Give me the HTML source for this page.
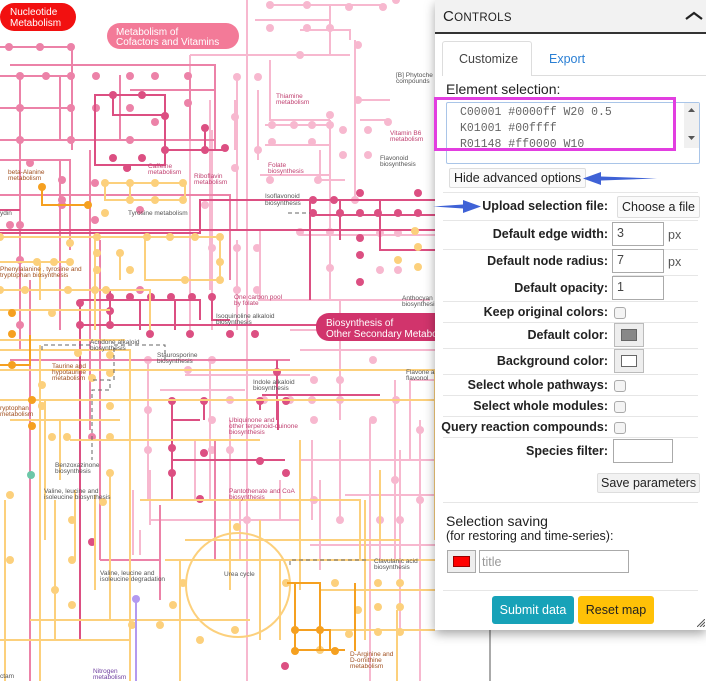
<!DOCTYPE html>
<html><head><meta charset="utf-8"><style>
*{box-sizing:border-box}
body{margin:0;width:706px;height:681px;overflow:hidden;background:#fff;font-family:"Liberation Sans",Arial,sans-serif;position:relative}
#map{position:absolute;left:0;top:0}
#panel{position:absolute;left:435px;top:0;width:271px;height:630px;background:#fff;box-shadow:0 4px 10px rgba(0,0,0,.35);font-size:12.5px;color:#222}
.hdr{height:34px;background:#f2f2f2;border-bottom:2px solid #333;padding:8px 0 0 8px;font-size:15px;letter-spacing:.3px}
.hdr small{font-size:11.5px}
.row{position:absolute;left:8px;right:8px;border-top:1px solid #e6e6e6}
.lbl{position:absolute;right:98px;font-weight:bold;text-align:right;white-space:nowrap;font-size:12.5px}
.inp{position:absolute;left:177px;width:52px;height:24px;border:1px solid #aaa;padding:3px 4px;font-size:12.5px;color:#444}
.cb{position:absolute;left:179px;width:12px;height:12px;border:1px solid #aaa;border-radius:3px;background:#f4f4f4}
.btn{position:absolute;background:#f2f2f2;border:1px solid #ddd;border-radius:2px;padding:2px 4px;font-size:12.5px;white-space:nowrap}
</style></head><body>
<svg id="map" width="706" height="681" viewBox="0 0 706 681" fill="none" stroke-width="2">
<g stroke="#f7b8cf">
<path d="M247 0V681M270 5H385M255 20H330M330 5V55M270 60V120H330M300 30H350V40M308 55H255M258 90V160M190 55H350M190 55V120M237 80V230M330 120V300M355 40V200M355 100H390M360 120H390M265 125H330M265 145H330M260 175H330M320 180H345M320 150V180M300 235H450M310 230V300M258 300H430M290 330H435M300 350H435M237 240V330M260 230V300M212 130V330M190 110V330M340 300V420M280 400H435M370 420V681M395 380V560M410 380H435M410 380V460M312 440V520M300 460H435M320 480V570M355 400H435M420 420V681M400 450V630M210 100V290M235 100V150M215 440V520M340 440V520M345 495H435M380 470V560M310 545H435M150 520H300M140 530V555M133 490V555M150 470V525M280 480V520"/>
<path d="M148 360V500M210 360V500M160 390H245M195 440V500M185 375H310M230 420V560M240 500V560"/>
</g>
<g fill="#f7b8cf" stroke="none">
<circle cx="270" cy="5" r="4"/><circle cx="307" cy="5" r="4"/><circle cx="349" cy="7" r="4"/><circle cx="383" cy="7" r="4"/><circle cx="270" cy="28" r="4"/><circle cx="307" cy="28" r="4"/><circle cx="330" cy="28" r="4"/><circle cx="237" cy="77" r="4"/><circle cx="258" cy="77" r="4"/><circle cx="300" cy="55" r="4"/><circle cx="358" cy="45" r="4"/><circle cx="358" cy="100" r="4"/><circle cx="388" cy="122" r="4"/><circle cx="330" cy="115" r="4"/><circle cx="272" cy="125" r="4"/><circle cx="294" cy="125" r="4"/><circle cx="312" cy="125" r="4"/><circle cx="330" cy="125" r="4"/><circle cx="272" cy="142" r="4"/><circle cx="312" cy="142" r="4"/><circle cx="343" cy="130" r="4"/><circle cx="368" cy="130" r="4"/><circle cx="343" cy="155" r="4"/><circle cx="368" cy="155" r="4"/><circle cx="318" cy="180" r="4"/><circle cx="270" cy="180" r="4"/><circle cx="205" cy="205" r="4"/><circle cx="235" cy="117" r="4"/><circle cx="235" cy="168" r="4"/><circle cx="258" cy="150" r="4"/><circle cx="380" cy="233" r="4"/><circle cx="398" cy="233" r="4"/><circle cx="398" cy="270" r="4"/><circle cx="380" cy="270" r="4"/><circle cx="300" cy="232" r="4"/><circle cx="330" cy="232" r="4"/><circle cx="330" cy="268" r="4"/><circle cx="257" cy="248" r="4"/><circle cx="257" cy="290" r="4"/><circle cx="237" cy="248" r="4"/><circle cx="237" cy="290" r="4"/><circle cx="212" cy="248" r="4"/><circle cx="212" cy="360" r="4"/><circle cx="148" cy="360" r="4"/><circle cx="148" cy="410" r="4"/><circle cx="148" cy="450" r="4"/><circle cx="212" cy="420" r="4"/><circle cx="212" cy="450" r="4"/><circle cx="264" cy="400" r="4"/><circle cx="290" cy="400" r="4"/><circle cx="312" cy="400" r="4"/><circle cx="340" cy="400" r="4"/><circle cx="230" cy="400" r="4"/><circle cx="188" cy="370" r="4"/><circle cx="230" cy="450" r="4"/><circle cx="247" cy="520" r="4"/><circle cx="314" cy="380" r="4"/><circle cx="340" cy="380" r="4"/><circle cx="314" cy="420" r="4"/><circle cx="314" cy="500" r="4"/><circle cx="340" cy="520" r="4"/><circle cx="380" cy="520" r="4"/><circle cx="400" cy="520" r="4"/><circle cx="420" cy="500" r="4"/><circle cx="396" cy="400" r="4"/><circle cx="396" cy.="460" r="4"/><circle cx="420" cy="430" r="4"/><circle cx="373" cy="360" r="4"/><circle cx="373" cy="420" r="4"/><circle cx="395" cy="480" r="4"/><circle cx="355" cy="200" r="4"/></g>
<g stroke="#ec82a8">
<path d="M0 47H72V150M0 76H72M0 108H72M10 65H215V150M20 75V140M60 75V140H180M120 75V140M130 90H215M190 75V140M0 140H215M0 160H70V250M60 160V330M90 150V430M20 140V350M100 240V560M0 195H140M140 195H230V280M30 280V330M10 360H290M30 300V681M215 440V560M160 505V600M100 560H160"/>
</g>
<g fill="#ec82a8" stroke="none">
<circle cx="9" cy="47" r="4"/><circle cx="40" cy="47" r="4"/><circle cx="71" cy="47" r="4"/><circle cx="20" cy="76" r="4"/><circle cx="46" cy="76" r="4"/><circle cx="71" cy="76" r="4"/><circle cx="96" cy="76" r="4"/><circle cx="130" cy="76" r="4"/><circle cx="155" cy="76" r="4"/><circle cx="188" cy="76" r="4"/><circle cx="20" cy="108" r="4"/><circle cx="71" cy="108" r="4"/><circle cx="96" cy="108" r="4"/><circle cx="130" cy="108" r="4"/><circle cx="188" cy="103" r="4"/><circle cx="20" cy="140" r="4"/><circle cx="71" cy="140" r="4"/><circle cx="130" cy="140" r="4"/><circle cx="155" cy="122" r="4"/><circle cx="30" cy="163" r="4"/><circle cx="62" cy="180" r="4"/><circle cx="62" cy="200" r="4"/><circle cx="95" cy="183" r="4"/><circle cx="95" cy="220" r="4"/><circle cx="140" cy="210" r="4"/><circle cx="20" cy="225" r="4"/><circle cx="20" cy="260" r="4"/><circle cx="10" cy="225" r="4"/><circle cx="62" cy="205" r="4"/><circle cx="140" cy="290" r="4"/><circle cx="20" cy="325" r="4"/><circle cx="92" cy="437" r="4"/></g>
<g stroke="#dc4f82">
<path d="M95 95H165V165H95ZM113 95V115H165M165 115V150H225M205 128V150M165 165V115M130 165V170M0 230H435M0 233H200V200H435M310 200V300M312 215H435M340 200V240M380 200V250H435M310 270V283M0 210H20M80 300H200V320M80 300V640M80 325H435M110 325V290M140 300V330M175 300V330M212 300V320H230M172 400H290M172 400V500M172 420H200M172 460H285M204 420V400M172 500H200M260 400V410M262 395H380M277 400V360M277 400V420M278 400V430"/>
</g>
<g fill="#dc4f82" stroke="none">
<circle cx="113" cy="95" r="4"/><circle cx="142" cy="95" r="4"/><circle cx="165" cy="116" r="4"/><circle cx="205" cy="128" r="4"/><circle cx="205" cy="150" r="4"/><circle cx="225" cy="148" r="4"/><circle cx="165" cy="150" r="4"/><circle cx="113" cy="158" r="4"/><circle cx="142" cy="158" r="4"/><circle cx="127" cy="168" r="4"/><circle cx="313" cy="200" r="4"/><circle cx="334" cy="200" r="4"/><circle cx="360" cy="193" r="4"/><circle cx="360" cy="213" r="4"/><circle cx="360" cy="238" r="4"/><circle cx="360" cy="255" r="4"/><circle cx="360" cy="282" r="4"/><circle cx="313" cy="213" r="4"/><circle cx="340" cy="213" r="4"/><circle cx="378" cy="213" r="4"/><circle cx="398" cy="213" r="4"/><circle cx="418" cy="213" r="4"/><circle cx="418" cy="193" r="4"/><circle cx="110" cy="297" r="4"/><circle cx="130" cy="297" r="4"/><circle cx="151" cy="297" r="4"/><circle cx="171" cy="297" r="4"/><circle cx="192" cy="297" r="4"/><circle cx="212" cy="297" r="4"/><circle cx="110" cy="311" r="4"/><circle cx="80" cy="303" r="4"/><circle cx="80" cy="325" r="4"/><circle cx="110" cy="325" r="4"/><circle cx="150" cy="334" r="4"/><circle cx="190" cy="334" r="4"/><circle cx="230" cy="334" r="4"/><circle cx="255" cy="334" r="4"/><circle cx="172" cy="401" r="4"/><circle cx="204" cy="401" r="4"/><circle cx="260" cy="401" r="4"/><circle cx="286" cy="401" r="4"/><circle cx="277" cy="372" r="4"/><circle cx="172" cy="448" r="4"/><circle cx="172" cy="473" r="4"/><circle cx="200" cy="499" r="4"/><circle cx="204" cy="453" r="4"/><circle cx="260" cy="461" r="4"/><circle cx="286" cy="473" r="4"/><circle cx="92" cy="542" r="4"/><circle cx="285" cy="666" r="4"/></g>
<g stroke="#fcd07c">
<path d="M105 183H185V200H105ZM130 183V200M0 237H220V280H145V237M95 237V330M120 250V280M0 262H70M40 262V300M0 290H150V330M0 310H110M0 350H130V681M0 340H125M40 345V681M0 370H435V540M0 400H435M45 400V540M10 420H120M60 420V480M70 440H100M130 420V600M100 440H260M110 470V620M75 490V560M140 500H360V560M165 560H435M55 500V640M95 495V590M230 520V590M185 540H380M180 560V681M260 520V640M30 620H250M0 640H130M300 440V590M280 560V640M255 540H400M320 590H435M315 630H435M365 500V640M380 470V540M397 610V681M5 500V681"/>
<circle cx="238" cy="585" r="52"/>
</g>
<g fill="#fcd07c" stroke="none">
<circle cx="105" cy="183" r="4"/><circle cx="130" cy="183" r="4"/><circle cx="155" cy="183" r="4"/><circle cx="183" cy="183" r="4"/><circle cx="130" cy="200" r="4"/><circle cx="155" cy="200" r="4"/><circle cx="183" cy="200" r="4"/><circle cx="105" cy="213" r="4"/><circle cx="0" cy="237" r="4"/><circle cx="97" cy="237" r="4"/><circle cx="147" cy="237" r="4"/><circle cx="170" cy="237" r="4"/><circle cx="195" cy="237" r="4"/><circle cx="220" cy="237" r="4"/><circle cx="220" cy="262" r="4"/><circle cx="220" cy="280" r="4"/><circle cx="185" cy="280" r="4"/><circle cx="97" cy="253" r="4"/><circle cx="120" cy="253" r="4"/><circle cx="97" cy="270" r="4"/><circle cx="130" cy="270" r="4"/><circle cx="70" cy="243" r="4"/><circle cx="37" cy="262" r="4"/><circle cx="54" cy="262" r="4"/><circle cx="70" cy="262" r="4"/><circle cx="25" cy="290" r="4"/><circle cx="68" cy="290" r="4"/><circle cx="95" cy="290" r="4"/><circle cx="106" cy="290" r="4"/><circle cx="0" cy="290" r="4"/><circle cx="52" cy="313" r="4"/><circle cx="78" cy="353" r="4"/><circle cx="110" cy="355" r="4"/><circle cx="42" cy="385" r="4"/><circle cx="42" cy="406" r="4"/><circle cx="42" cy="406" r="4"/><circle cx="110" cy="373" r="4"/><circle cx="110" cy="406" r="4"/><circle cx="92" cy="378" r="4"/><circle cx="52" cy="437" r="4"/><circle cx="67" cy="437" r="4"/><circle cx="110" cy="437" r="4"/><circle cx="110" cy="473" r="4"/><circle cx="103" cy="502" r="4"/><circle cx="72" cy="520" r="4"/><circle cx="72" cy="560" r="4"/><circle cx="55" cy="590" r="4"/><circle cx="72" cy="605" r="4"/><circle cx="132" cy="625" r="4"/><circle cx="160" cy="625" r="4"/><circle cx="237" cy="527" r="4"/><circle cx="183" cy="583" r="4"/><circle cx="286" cy="583" r="4"/><circle cx="173" cy="605" r="4"/><circle cx="200" cy="640" r="4"/><circle cx="235" cy="630" r="4"/><circle cx="335" cy="583" r="4"/><circle cx="378" cy="583" r="4"/><circle cx="400" cy="583" r="4"/><circle cx="378" cy="607" r="4"/><circle cx="400" cy="607" r="4"/><circle cx="358" cy="610" r="4"/><circle cx="378" cy="632" r="4"/><circle cx="400" cy="632" r="4"/><circle cx="349" cy="634" r="4"/><circle cx="320" cy="650" r="4"/><circle cx="10" cy="495" r="4"/><circle cx="10" cy="560" r="4"/><circle cx="415" cy="231" r="4"/><circle cx="398" cy="260" r="4"/><circle cx="418" cy="267" r="4"/><circle cx="418" cy="247" r="4"/></g>
<g stroke="#f5a020"><path d="M42 185V205H90M30 335V360M0 365H30V340M287 583H320V630M295 630H330V651M296 650H345M320 630V651M295 583V650M355 583V651"/></g>
<g fill="#f5a020" stroke="none"><circle cx="42" cy="187" r="4"/><circle cx="88" cy="205" r="4"/><circle cx="12" cy="313" r="4"/><circle cx="12" cy="334" r="4"/><circle cx="32" cy="400" r="4"/><circle cx="32" cy="426" r="4"/><circle cx="12" cy="365" r="4"/><circle cx="295" cy="630" r="4"/><circle cx="320" cy="630" r="4"/><circle cx="295" cy="651" r="4"/><circle cx="335" cy="651" r="4"/></g>
<circle cx="31" cy="475" r="4" fill="#6cc7a8"/><circle cx="136" cy="599" r="4" fill="#b39af0"/><path d="M136 600V681" stroke="#b39af0"/>
<g stroke="#666" stroke-width="1" stroke-dasharray="4 3"><path d="M42 350V345H90M93 380H110V390H92V460M288 213H310M290 565V560H368M114 380V345H165V360"/></g>
<path d="M490 630V681" stroke="#555" stroke-width="1"/>
<rect x="0" y="3" width="76" height="28" rx="14" fill="#f21010"/>
<rect x="107" y="23" width="132" height="26" rx="13" fill="#f37a98"/>
<rect x="316" y="313" width="140" height="28" rx="13" fill="#d1346c"/>
<g font-family="Liberation Sans" stroke="none">
<text fill="#fff" font-size="10"><tspan x="10" y="15">Nucleotide</tspan><tspan x="10" y="26">Metabolism</tspan></text>
<text fill="#fff" font-size="10"><tspan x="116" y="35">Metabolism of</tspan><tspan x="116" y="45">Cofactors and Vitamins</tspan></text>
<text fill="#fff" font-size="10"><tspan x="326" y="326">Biosynthesis of</tspan><tspan x="326" y="337">Other Secondary Metabo</tspan></text>
<g font-size="6.5" fill="#c04070">
<text x="276" y="98">Thiamine</text><text x="276" y="104">metabolism</text>
<text x="148" y="168">Caffeine</text><text x="148" y="174">metabolism</text>
<text x="194" y="178">Riboflavin</text><text x="194" y="184">metabolism</text>
<text x="268" y="167">Folate</text><text x="268" y="173">biosynthesis</text>
<text x="390" y="135">Vitamin B6</text><text x="390" y="141">metabolism</text>
<text x="234" y="299">One carbon pool</text><text x="234" y="305">by folate</text>
<text x="229" y="422">Ubiquinone and</text><text x="229" y="428">other terpenoid-quinone</text><text x="229" y="434">biosynthesis</text>
<text x="229" y="493">Pantothenate and CoA</text><text x="229" y="499">biosynthesis</text>
</g>
<g font-size="6.5" fill="#a05020">
<text x="8" y="174">beta-Alanine</text><text x="8" y="180">metabolism</text>
<text x="52" y="368">Taurine and</text><text x="52" y="374">hypotaurine</text><text x="52" y="380">metabolism</text>
<text x="0" y="410">ryptophan</text><text x="0" y="416">metabolism</text>
<text x="0" y="271">Phenylalanine , tyrosine and</text><text x="0" y="277">tryptophan biosynthesis</text>
<text x="350" y="656">D-Arginine and</text><text x="350" y="662">D-ornithine</text><text x="350" y="668">metabolism</text>
</g>
<g font-size="6.5" fill="#555">
<text x="128" y="215">Tyrosine metabolism</text>
<text x="0" y="215">ydin</text>
<text x="265" y="198">Isoflavonoid</text><text x="265" y="205">biosynthesis</text>
<text x="216" y="318">Isoquinoline alkaloid</text><text x="216" y="324">biosynthesis</text>
<text x="90" y="344">Acridone alkaloid</text><text x="90" y="350">biosynthesis</text>
<text x="157" y="357">Staurosporine</text><text x="157" y="363">biosynthesis</text>
<text x="253" y="384">Indole alkaloid</text><text x="253" y="390">biosynthesis</text>
<text x="55" y="467">Benzoxazinone</text><text x="55" y="473">biosynthesis</text>
<text x="44" y="493">Valine, leucine and</text><text x="44" y="499">isoleucine biosynthesis</text>
<text x="100" y="575">Valine, leucine and</text><text x="100" y="581">isoleucine degradation</text>
<text x="224" y="576">Urea cycle</text>
<text x="374" y="563">Clavulanic acid</text><text x="374" y="569">biosynthesis</text>
<text x="402" y="300">Anthocyan</text><text x="402" y="306">biosynthesi</text>
<text x="380" y="160">Flavonoid</text><text x="380" y="166">biosynthesis</text>
<text x="396" y="77">[B] Phytoche</text><text x="396" y="83">compounds</text>
<text x="406" y="374">Flavone a</text><text x="406" y="380">flavonol</text>
<text x="0" y="678">ctam</text>
</g>
<text font-size="6.5" fill="#7040a0"><tspan x="93" y="673">Nitrogen</tspan><tspan x="93" y="679">metabolism</tspan></text>
</g>
</svg>

<div id="panel">
<div class="hdr"><span style="font-size:15px">C</span><small>ONTROLS</small><svg style="position:absolute;right:2px;top:10px" width="20" height="12"><path d="M2 9L10 3L18 9" stroke="#222" stroke-width="2.2" fill="none"/></svg></div>
<div style="position:absolute;left:7px;top:41px;width:90px;height:35px;border:1px solid #ddd;border-bottom:none;border-radius:3px 3px 0 0;background:#fff;padding:10px 0 0 16px;color:#444;font-size:12.5px">Customize</div>
<div style="position:absolute;left:114px;top:52px;color:#2a7fd4;font-size:12.5px">Export</div>
<div style="position:absolute;left:96px;right:0;top:75px;border-top:1px solid #ddd"></div>
<div style="position:absolute;left:11px;top:81px;font-size:14px;color:#222">Element selection:</div>
<div style="position:absolute;left:11px;top:102px;width:254px;height:62px;border:1px solid #a9c5e8;border-radius:2px;font-family:'Liberation Mono',monospace;font-size:11.5px;color:#666;padding:2px 0 0 13px;line-height:16px">C00001 #0000ff W20 0.5<br>K01001 #00ffff<br>R01148 #ff0000 W10
<div style="position:absolute;right:0;top:0;width:15px;height:45px;background:#f0f0f0"><svg width="15" height="45"><path d="M4 9L7.5 5L11 9Z M4 33L7.5 37L11 33Z" fill="#555"/></svg></div>
</div>
<div style="position:absolute;left:-1px;top:97px;width:242px;height:54px;border:3px solid #e23ee0"></div>
<div class="btn" style="left:14px;top:168px;background:#fafafa">Hide advanced options</div>
<svg style="position:absolute;left:148px;top:171px" width="75" height="15"><path d="M0 7.5L18 1V5.5L74 7.5L18 9.5V14Z" fill="#3f62d6"/></svg>
<div class="row" style="top:192px"></div>
<svg style="position:absolute;left:-2px;top:199px" width="50" height="15"><path d="M0 7.5L30 5.5V1L48 7.5L30 14V9.5Z" fill="#3f62d6"/></svg>
<div class="lbl" style="top:199px">Upload selection file:</div>
<div class="btn" style="left:182px;top:196px;background:#fafafa;padding:3px 4px">Choose a file</div>
<div class="row" style="top:220px"></div>
<div class="lbl" style="top:227px">Default edge width:</div><div class="inp" style="top:222px">3</div><div style="position:absolute;left:233px;top:228px;color:#555">px</div>
<div class="row" style="top:249px"></div>
<div class="lbl" style="top:254px">Default node radius:</div><div class="inp" style="top:249px">7</div><div style="position:absolute;left:233px;top:255px;color:#555">px</div>
<div class="row" style="top:275px;left:178px"></div>
<div class="lbl" style="top:281px">Default opacity:</div><div class="inp" style="top:276px">1</div>
<div class="row" style="top:301px"></div>
<div class="lbl" style="top:305px">Keep original colors:</div><div class="cb" style="top:307px"></div>
<div class="row" style="top:322px"></div>
<div class="lbl" style="top:328px">Default color:</div>
<div style="position:absolute;left:179px;top:323px;width:30px;height:24px;border:1px solid #bbb;background:#eee;padding:5px 6px"><div style="width:100%;height:100%;background:#888;border:1px solid #666"></div></div>
<div class="row" style="top:348px"></div>
<div class="lbl" style="top:354px">Background color:</div>
<div style="position:absolute;left:179px;top:349px;width:30px;height:24px;border:1px solid #bbb;background:#eee;padding:5px 6px"><div style="width:100%;height:100%;background:#fff;border:1px solid #666"></div></div>
<div class="row" style="top:374px"></div>
<div class="lbl" style="top:378px">Select whole pathways:</div><div class="cb" style="top:380px"></div>
<div class="row" style="top:395px"></div>
<div class="lbl" style="top:399px">Select whole modules:</div><div class="cb" style="top:401px"></div>
<div class="row" style="top:416px"></div>
<div class="lbl" style="top:420px">Query reaction compounds:</div><div class="cb" style="top:422px"></div>
<div class="row" style="top:437px"></div>
<div class="lbl" style="top:444px">Species filter:</div><div class="inp" style="top:439px;left:178px;width:60px">&nbsp;</div>
<div class="btn" style="left:162px;top:473px;padding:2px 3px">Save parameters</div>
<div class="row" style="top:502px"></div>
<div style="position:absolute;left:11px;top:513px;font-size:14px">Selection saving</div>
<div style="position:absolute;left:11px;top:529px;font-size:12.5px">(for restoring and time-series):</div>
<div style="position:absolute;left:12px;top:550px;width:29px;height:23px;border:1px solid #aaa;background:#eee;padding:5px 5px"><div style="width:100%;height:100%;background:#f00;border:1px solid #900"></div></div>
<div style="position:absolute;left:44px;top:550px;width:150px;height:23px;border:1px solid #aaa;padding:4px 2px;color:#999;font-size:12.5px">title</div>
<div class="row" style="top:590px"></div>
<div style="position:absolute;left:57px;top:596px;width:82px;height:28px;background:#17a2b8;border-radius:3px;color:#fff;font-size:12.5px;text-align:center;line-height:28px">Submit data</div>
<div style="position:absolute;left:143px;top:596px;width:76px;height:28px;background:#ffc107;border-radius:3px;color:#222;font-size:12.5px;text-align:center;line-height:28px">Reset map</div>
<svg style="position:absolute;right:1px;bottom:3px" width="8" height="8"><path d="M0 8L8 0M3 8L8 3M6 8L8 6" stroke="#555"/></svg>
</div>
</body></html>
